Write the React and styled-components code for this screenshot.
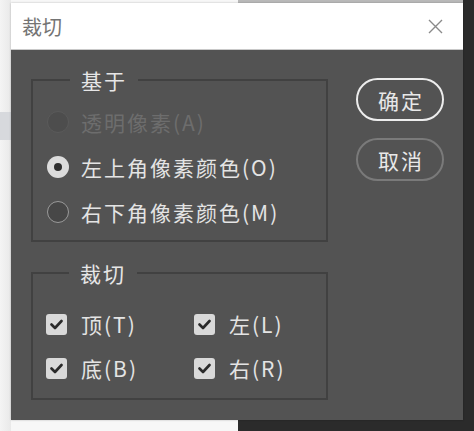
import React from 'react';
import styled, { createGlobalStyle } from 'styled-components';

const Global = createGlobalStyle`
  html, body { margin: 0; padding: 0; }
  body { font-family: "Noto Sans CJK SC", "Noto Sans", sans-serif; }
`;

const Page = styled.div`
  width: 474px;
  height: 431px;
  overflow: hidden;
  padding: 3px 0 0 11px;
  box-sizing: border-box;
  background:
    linear-gradient(#b9b9b9, #b9b9b9) 238px 0 / 225px 3px no-repeat,
    linear-gradient(#2b2b2b, #2b2b2b) 463px 0 / 11px 100% no-repeat,
    linear-gradient(#2b2b2b, #2b2b2b) 238px 420px / 236px 11px no-repeat,
    linear-gradient(#d7d9dd, #d7d9dd) 0 112px / 11px 28px no-repeat,
    linear-gradient(90deg, #f4f4f4, #e9e9e9) 0 0 / 11px 100% no-repeat,
    #f7f7f7;
`;

const Dialog = styled.div`
  width: 452px;
  height: 417px;
  display: flex;
  flex-direction: column;
  background: #535353;
  box-shadow: 0 0 2px rgba(0, 0, 0, 0.25);
`;

const TitleBar = styled.div`
  height: 46px;
  flex: none;
  display: flex;
  align-items: center;
  justify-content: space-between;
  padding: 0 20px 0 11px;
  background: #ffffff;
  border-bottom: 1px solid #c9c9c9;
`;

const Title = styled.span`
  font-size: 20px;
  color: #747474;
`;

const Close = styled.button`
  width: 16px;
  height: 16px;
  padding: 0;
  border: 0;
  background: none;
  display: flex;
  align-items: center;
  justify-content: center;
`;

const Body = styled.div`
  flex: 1;
  display: flex;
  gap: 28px;
  padding: 18px 19px 20px 20px;
`;

const LeftCol = styled.div`
  display: flex;
  flex-direction: column;
  gap: 19px;
`;

const Group = styled.fieldset`
  width: 297px;
  box-sizing: border-box;
  margin: 0;
  padding: ${p => p.$pad};
  border: 2px solid #414141;
  min-width: 0;
`;

const Legend = styled.legend`
  margin-left: 23px;
  padding: 0 11px;
  font-size: 21px;
  line-height: 24px;
  letter-spacing: 2px;
  color: #e6e6e6;
`;

const Option = styled.label`
  height: 45px;
  display: flex;
  align-items: center;
  gap: 12px;
  font-size: 21px;
  letter-spacing: 2px;
  color: ${p => (p.$disabled ? '#6d6d6d' : '#e4e4e4')};
`;

const Radio = styled.span`
  width: 22px;
  height: 22px;
  box-sizing: border-box;
  border-radius: 50%;
  flex: none;
  display: flex;
  align-items: center;
  justify-content: center;
  background: ${p => (p.$checked ? '#dcdcdc' : p.$disabled ? '#4d4d4d' : '#474747')};
  border: ${p => (p.$checked ? 'none' : p.$disabled ? '1.5px solid #5a5a5a' : '1.5px solid #9a9a9a')};
  &::after {
    content: '';
    display: ${p => (p.$checked ? 'block' : 'none')};
    width: 8px;
    height: 8px;
    border-radius: 50%;
    background: #2e2e2e;
  }
`;

const CheckGrid = styled.div`
  display: grid;
  grid-template-columns: 148px 1fr;
  grid-auto-rows: 44px;
`;

const Check = styled.label`
  display: flex;
  align-items: center;
  gap: 14px;
  font-size: 21px;
  letter-spacing: 2px;
  color: #e4e4e4;
`;

const Box = styled.span`
  width: 21px;
  height: 21px;
  flex: none;
  border-radius: 3px;
  background: #d9d9d9;
  display: flex;
  align-items: center;
  justify-content: center;
`;

const RightCol = styled.div`
  display: flex;
  flex-direction: column;
  gap: 17px;
  margin-top: 10px;
`;

const Button = styled.button`
  width: 88px;
  height: 43px;
  box-sizing: border-box;
  border-radius: 22px;
  background: transparent;
  border: 2px solid ${p => (p.$primary ? '#ededed' : '#7a7a7a')};
  color: #e8e8e8;
  font-family: "Noto Sans CJK SC", sans-serif;
  font-size: 21px;
  letter-spacing: 2px;
  padding: 0 0 0 2px;
`;

const CheckMark = () => (
  <svg width="13" height="11" viewBox="0 0 13 11">
    <path d="M1.5 5.5 L5 9 L11.5 2" fill="none" stroke="#2a2a2a" strokeWidth="2.6" strokeLinecap="round" strokeLinejoin="round" />
  </svg>
);

const radios = [
  { text: '透明像素(A)', disabled: true },
  { text: '左上角像素颜色(O)', checked: true },
  { text: '右下角像素颜色(M)' },
];

const checks = ['顶(T)', '左(L)', '底(B)', '右(R)'];

export default function App() {
  return (
    <Page>
      <Global />
      <Dialog>
        <TitleBar>
          <Title>裁切</Title>
          <Close aria-label="close">
            <svg width="15" height="15" viewBox="0 0 15 15">
              <path d="M1 1 L14 14 M14 1 L1 14" stroke="#8a8a8a" strokeWidth="1.4" />
            </svg>
          </Close>
        </TitleBar>
        <Body>
          <LeftCol>
            <Group $pad="7px 14px 6px">
              <Legend>基于</Legend>
              {radios.map(r => (
                <Option key={r.text} $disabled={r.disabled}>
                  <Radio $checked={r.checked} $disabled={r.disabled} />
                  {r.text}
                </Option>
              ))}
            </Group>
            <Group $pad="17px 14px 8px 13px">
              <Legend>裁切</Legend>
              <CheckGrid>
                {checks.map(c => (
                  <Check key={c}>
                    <Box><CheckMark /></Box>
                    {c}
                  </Check>
                ))}
              </CheckGrid>
            </Group>
          </LeftCol>
          <RightCol>
            <Button $primary>确定</Button>
            <Button>取消</Button>
          </RightCol>
        </Body>
      </Dialog>
    </Page>
  );
}
